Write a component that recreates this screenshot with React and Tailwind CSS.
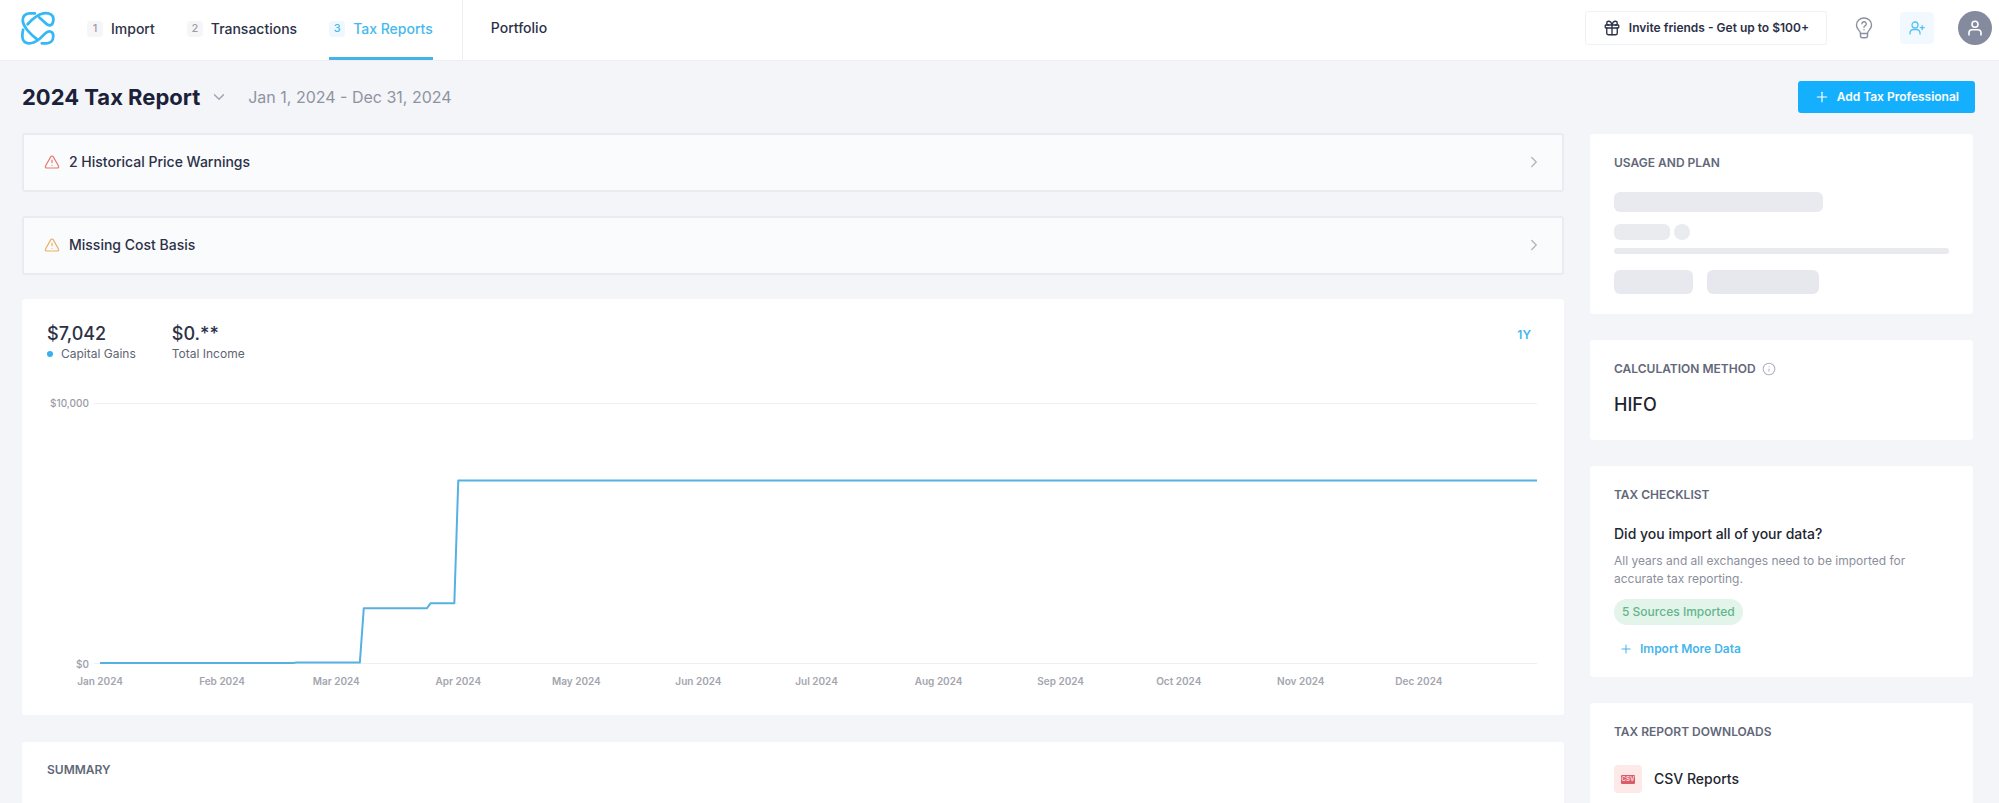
import React, { useState } from 'react';
import { AlertTriangle, ChevronDown, ChevronRight, Gift, Info, Plus } from 'lucide-react';

const navItems = [
    { step: 1, label: 'Import' },
    { step: 2, label: 'Transactions' },
    { step: 3, label: 'Tax Reports' },
];

const warnings = [
    { label: '2 Historical Price Warnings', color: 'text-[#e8796f]' },
    { label: 'Missing Cost Basis', color: 'text-[#e8b163]' },
];

const months = [
    { label: 'Jan 2024', days: 31 },
    { label: 'Feb 2024', days: 29 },
    { label: 'Mar 2024', days: 31 },
    { label: 'Apr 2024', days: 30 },
    { label: 'May 2024', days: 31 },
    { label: 'Jun 2024', days: 30 },
    { label: 'Jul 2024', days: 31 },
    { label: 'Aug 2024', days: 31 },
    { label: 'Sep 2024', days: 30 },
    { label: 'Oct 2024', days: 31 },
    { label: 'Nov 2024', days: 30 },
    { label: 'Dec 2024', days: 30 },
];

// [day of year, capital gains]
const gains = [
    [0, 0],
    [49, 0],
    [50, 15],
    [66, 15],
    [67, 2110],
    [83, 2110],
    [84, 2310],
    [90, 2310],
    [91, 7042],
    [365, 7042],
];

const Logo = () => (
    <svg viewBox="64 34 98 98" className="h-[34px] w-[34px]" fill="none" stroke="#35b8f5" strokeWidth="8" strokeLinecap="round">
        <path d="M104 41H88C76 41 68 50 69 62C70 80 88 98 112 117" />
        <path d="M83 72C98 56 112 44 128 41C148 38 160 46 157 62C155 77 145 78 137 71L117 53" />
        <path d="M70 88C67 102 66 118 76 124C88 131 104 125 118 114L136 97C146 89 157 94 157 106C157 121 148 127 138 127H124" />
    </svg>
);

const BulbIcon = () => (
    <svg viewBox="0 0 18 22" className="h-[22px] w-[18px]" fill="none" stroke="#8b909e" strokeWidth="1.4" strokeLinecap="round" strokeLinejoin="round">
        <path d="M5.5 16.5C5.5 13.5 1.5 12.5 1.5 8.2a7.5 7.2 0 0 1 15 0c0 4.3-4 5.3-4 8.3z" />
        <path d="M5.5 16.5v2.2c0 1.2.8 2 2 2h3c1.2 0 2-.8 2-2v-2.2" />
        <path d="M6.9 6.8a2.2 2.2 0 1 1 3.1 2.1c-.7.3-1 .7-1 1.4" />
        <path d="M9 12.7v.1" />
    </svg>
);

const PersonIcon = () => (
    <svg viewBox="0 0 16 16" className="h-4 w-4" fill="none" stroke="#fff" strokeWidth="1.6" strokeLinecap="round" strokeLinejoin="round">
        <circle cx="8" cy="4.2" r="3" />
        <path d="M2 15v-2.2a3 3 0 0 1 3-3h6a3 3 0 0 1 3 3V15" />
    </svg>
);

const PersonPlusIcon = () => (
    <svg viewBox="0 0 16 14" className="h-[14px] w-4" fill="none" stroke="#53c1f5" strokeWidth="1.3" strokeLinecap="round" strokeLinejoin="round">
        <circle cx="6" cy="4" r="3" />
        <path d="M1 13v-1a3.5 3.5 0 0 1 3.5-3.5h3A3.5 3.5 0 0 1 11 12v1" />
        <path d="M13.2 4.7v4M11.2 6.7h4" />
    </svg>
);

const Header = () => (
    <header className="flex h-[61px] items-center justify-between border-b border-[#eeeff3] bg-white pr-[7px] pl-[21px]">
        <div className="flex h-full items-center">
            <a href="#" aria-label="Home" className="pb-1">
                <Logo />
            </a>
            <nav className="ml-8 flex h-full items-center">
                <div className="flex h-full items-center gap-8 border-r border-[#eeeff3] pr-[29px]">
                    {navItems.map((item) => {
                        const active = item.step === 3;
                        return (
                            <a
                                key={item.step}
                                href="#"
                                className={`flex h-full items-center gap-2 border-b-[3px] text-sm font-medium ${active ? 'border-[#45b3e5] text-[#45b9ee]' : 'border-transparent text-[#2c3147]'}`}
                            >
                                <span
                                    className={`flex h-4 w-4 items-center justify-center rounded-sm text-[11px] ${active ? 'bg-[#eef8fe]' : 'bg-[#f6f6f8] text-[#9b9ea8]'}`}
                                >
                                    {item.step}
                                </span>
                                {item.label}
                            </a>
                        );
                    })}
                </div>
                <a href="#" className="ml-7 pb-1 text-sm font-medium text-[#2c3147]">Portfolio</a>
            </nav>
        </div>
        <div className="flex items-center pb-1">
            <button className="flex h-[34px] items-center gap-2 rounded-[3px] border border-[#f0f1f4] px-[17px] text-xs font-semibold text-[#2c3147]">
                <Gift size={18} strokeWidth={1.8} />
                Invite friends - Get up to $100+
            </button>
            <button aria-label="Help" className="ml-7">
                <BulbIcon />
            </button>
            <button aria-label="Invite" className="ml-[27px] flex h-8 w-[34px] items-center justify-center rounded-sm bg-[#f1f9fe]">
                <PersonPlusIcon />
            </button>
            <button aria-label="Account" className="ml-6 flex h-[34px] w-[34px] items-center justify-center rounded-full bg-[#858b9e]">
                <PersonIcon />
            </button>
        </div>
    </header>
);

const GainsChart = () => {
    const points = gains.map(([day, value]) => `${day},${10000 - value}`).join(' ');

    return (
        <div className="mt-[34px]">
            <div className="flex">
                <div className="flex w-[53px] flex-col justify-between pr-[5px] text-right text-[10px] leading-3 font-medium text-[#9a9ca6]">
                    <span>$10,000</span>
                    <span>$0</span>
                </div>
                <div className="my-[6px] h-[261px] flex-1 border-y border-[#eeeff2] pl-[6px]">
                    <svg viewBox="0 0 365 10000" preserveAspectRatio="none" className="h-full w-full overflow-visible">
                        <polyline
                            points={points}
                            fill="none"
                            stroke="#55b1e2"
                            strokeWidth="2"
                            strokeLinejoin="round"
                            vectorEffect="non-scaling-stroke"
                        />
                    </svg>
                </div>
            </div>
            <div className="mt-[5px] ml-[59px] flex text-[10px] leading-3 font-semibold text-[#a3a5ae]">
                {months.map((month) => (
                    <div key={month.label} className="w-0" style={{ flexGrow: month.days }}>
                        <span className="inline-block -translate-x-1/2 whitespace-nowrap">{month.label}</span>
                    </div>
                ))}
            </div>
        </div>
    );
};

const CardTitle = ({ children }) => (
    <h2 className="text-xs leading-4 font-semibold text-[#626779] uppercase">{children}</h2>
);

const Card = ({ className, children }) => (
    <section className={`rounded-[3px] bg-white px-6 pt-[21px] ${className}`}>{children}</section>
);

const Sidebar = () => (
    <aside className="flex w-[383px] shrink-0 flex-col gap-[26px] pt-[1px]">
        <Card className="pb-5">
            <CardTitle>Usage and plan</CardTitle>
            <div className="mt-[21px] h-5 w-[209px] rounded-md bg-[#e8eaef]" />
            <div className="mt-3 flex gap-1">
                <div className="h-4 w-14 rounded-md bg-[#eaebef]" />
                <div className="h-4 w-4 rounded-full bg-[#eaebef]" />
            </div>
            <div className="mt-2 h-[6px] rounded-full bg-[#e9eaef]" />
            <div className="mt-4 flex gap-[14px]">
                <div className="h-6 w-[79px] rounded-md bg-[#e7e9ef]" />
                <div className="h-6 w-28 rounded-md bg-[#e7e8ee]" />
            </div>
        </Card>

        <Card className="pb-[23px]">
            <div className="flex items-center gap-[6px]">
                <CardTitle>Calculation method</CardTitle>
                <Info size={14} strokeWidth={1.8} className="text-[#b0b3bf]" />
            </div>
            <p className="mt-4 text-lg leading-6 font-medium text-[#1f2230]">HIFO</p>
        </Card>

        <Card className="pb-5">
            <CardTitle>Tax checklist</CardTitle>
            <h3 className="mt-[21px] text-sm leading-5 font-medium text-[#23262f]">Did you import all of your data?</h3>
            <p className="mt-2 text-xs leading-[18px] text-[#8b8f9c]">
                All years and all exchanges need to be imported for accurate tax reporting.
            </p>
            <span className="mt-[11px] flex h-[26px] w-fit items-center rounded-full bg-[#e3f4eb] px-2 text-xs font-medium text-[#62b68a]">
                5 Sources Imported
            </span>
            <a href="#" className="mt-4 ml-[5px] flex w-fit items-center gap-[7px] text-xs leading-4 font-semibold text-[#46b6ec]">
                <Plus size={14} strokeWidth={1.8} />
                Import More Data
            </a>
        </Card>

        <Card className="pb-5">
            <CardTitle>Tax report downloads</CardTitle>
            <a href="#" className="mt-[25px] flex items-center gap-3 text-sm font-medium text-[#23262f]">
                <span className="flex h-7 w-7 items-center justify-center rounded-sm bg-[#fdeae8]">
                    <span className="flex h-[9px] w-[14px] items-center justify-center rounded-[1px] bg-[#d95c68] text-[6px] font-bold text-[#fbdcdc]">
                        CSV
                    </span>
                </span>
                CSV Reports
            </a>
        </Card>
    </aside>
);

const App = () => {
    const [range, setRange] = useState('1Y');

    return (
        <div className="h-screen overflow-hidden bg-[#f4f5f9] font-['Inter',sans-serif]">
            <Header />
            <div className="flex items-center justify-between pt-5 pr-6 pl-[22px]">
                <div className="flex items-center">
                    <h1 className="text-[22px] leading-8 font-bold text-[#1b2138]">2024 Tax Report</h1>
                    <button aria-label="Choose tax year" className="ml-[10px] text-[#9ea2ae]">
                        <ChevronDown size={18} strokeWidth={1.8} />
                    </button>
                    <p className="ml-5 text-base text-[#8f93a1]">Jan 1, 2024 - Dec 31, 2024</p>
                </div>
                <button className="flex h-8 items-center gap-[7px] rounded-[3px] bg-[#15b0fd] px-4 text-xs font-semibold text-white">
                    <Plus size={16} strokeWidth={1.8} />
                    Add Tax Professional
                </button>
            </div>

            <div className="flex items-start gap-[26px] pt-5 pr-[26px] pl-[22px]">
                <main className="min-w-0 flex-1">
                    {warnings.map((warning) => (
                        <button
                            key={warning.label}
                            className="mb-6 flex h-[59px] w-full items-center rounded-[3px] border-2 border-[#e9ebf0] bg-[#fafbfd] pr-[19px] pb-[2px] pl-5 text-sm font-medium text-[#2c3147]"
                        >
                            <AlertTriangle size={16} strokeWidth={1.8} className={warning.color} />
                            <span className="ml-[9px] flex-1 text-left">{warning.label}</span>
                            <ChevronRight size={18} strokeWidth={1.8} className="text-[#b2b5bf]" />
                        </button>
                    ))}

                    <section className="mt-[2px] rounded-[3px] bg-white pt-6 pr-[27px] pb-7 pl-[19px]">
                        <div className="flex items-start justify-between pl-[6px]">
                            <div className="flex gap-9">
                                <div>
                                    <p className="text-lg leading-[22px] font-medium text-[#2c3147]">$7,042</p>
                                    <p className="flex items-center text-xs leading-[18px] text-[#5f6474]">
                                        <span className="mr-2 h-[6px] w-[6px] rounded-full bg-[#35b0f0]" />
                                        Capital Gains
                                    </p>
                                </div>
                                <div>
                                    <p className="text-lg leading-[22px] font-medium text-[#2c3147]">$0.**</p>
                                    <p className="text-xs leading-[18px] text-[#5f6474]">Total Income</p>
                                </div>
                            </div>
                            <button
                                onClick={() => setRange('1Y')}
                                className="mt-1 mr-[6px] text-xs leading-4 font-semibold text-[#46b6ec]"
                            >
                                {range}
                            </button>
                        </div>
                        <GainsChart />
                    </section>

                    <section className="mt-[27px] h-40 rounded-[3px] bg-white px-[25px] pt-5">
                        <CardTitle>Summary</CardTitle>
                    </section>
                </main>
                <Sidebar />
            </div>
        </div>
    );
};

export default App;
